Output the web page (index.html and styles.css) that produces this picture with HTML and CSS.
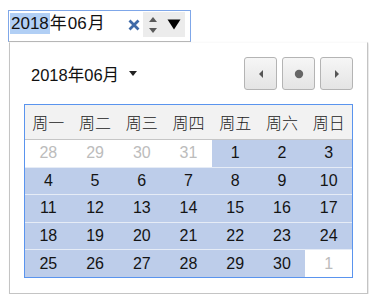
FILE: index.html
```html
<!DOCTYPE html>
<html lang="zh">
<head>
<meta charset="utf-8">
<link rel="stylesheet" href="styles.css">
</head>
<body>
<div class="field">
  <div class="value"><span class="seg sel">2018</span><span class="lit">年</span><span class="seg">06</span><span class="lit">月</span></div>
  <svg class="clear" width="12" height="12" viewBox="0 0 12 12"><path d="M1.5 1.5L10.5 10.5M10.5 1.5L1.5 10.5" stroke="#3f6aa8" stroke-width="2.8" stroke-linecap="butt"/></svg>
  <div class="spin">
    <svg width="10" height="22" viewBox="0 0 10 22"><path d="M1 8L5 3L9 8Z" fill="#5a5a5a"/><path d="M1 14L5 19L9 14Z" fill="#5a5a5a"/></svg>
  </div>
  <div class="drop">
    <svg width="14" height="11" viewBox="0 0 14 11"><path d="M0.5 0.5H13.5L7 10.5Z" fill="#000"/></svg>
  </div>
</div>
<div class="popup">
  <div class="head">
    <div class="title">2018年06月<span class="caret"></span></div>
    <div class="navs">
      <div class="btn"><svg width="8" height="10" viewBox="0 0 8 10"><path d="M6 1L2 5L6 9Z" fill="#555"/></svg></div>
      <div class="btn"><svg width="10" height="10" viewBox="0 0 10 10"><circle cx="5" cy="5" r="4.2" fill="#666"/></svg></div>
      <div class="btn"><svg width="8" height="10" viewBox="0 0 8 10"><path d="M2 1L6 5L2 9Z" fill="#555"/></svg></div>
    </div>
  </div>
  <div class="cal">
    <div class="wk"><span>周一</span><span>周二</span><span>周三</span><span>周四</span><span>周五</span><span>周六</span><span>周日</span></div>
    <div class="days">
      <div class="row"><span class="out">28</span><span class="out">29</span><span class="out">30</span><span class="out">31</span><span>1</span><span>2</span><span>3</span></div>
      <div class="row"><span>4</span><span>5</span><span>6</span><span>7</span><span>8</span><span>9</span><span>10</span></div>
      <div class="row"><span>11</span><span>12</span><span>13</span><span>14</span><span>15</span><span>16</span><span>17</span></div>
      <div class="row"><span>18</span><span>19</span><span>20</span><span>21</span><span>22</span><span>23</span><span>24</span></div>
      <div class="row"><span>25</span><span>26</span><span>27</span><span>28</span><span>29</span><span>30</span><span class="out">1</span></div>
    </div>
  </div>
</div>
</body>
</html>
```
FILE: styles.css
```css
html, body {
  margin: 0;
  padding: 0;
  background: #fff;
  font-family: "Liberation Sans", "Noto Sans CJK SC", sans-serif;
  color: #111;
}

.field {
  box-sizing: border-box;
  margin: 10px 0 0 8px;
  width: 183px;
  height: 32px;
  border: 1px solid #7fa7e9;
  border-bottom-color: #b8b8b8;
  display: flex;
  align-items: flex-start;
}

.value {
  flex: 1;
  margin-top: 2px;
  padding-left: 1px;
  font-size: 17px;
  line-height: 21px;
  display: flex;
  white-space: nowrap;
}

.seg {
  padding: 0 1px;
}

.sel {
  background: #b1cff5;
}

.clear {
  margin-top: 8px;
  margin-right: 3px;
}

.spin {
  width: 20px;
  height: 25px;
  margin-top: 1px;
  background: #ececec;
  display: flex;
  align-items: center;
  justify-content: center;
}

.drop {
  width: 22px;
  height: 25px;
  margin-top: 1px;
  margin-right: 5px;
  background: #ececec;
  display: flex;
  align-items: center;
  justify-content: center;
}

.popup {
  box-sizing: border-box;
  margin-left: 9px;
  width: 359px;
  height: 252px;
  border: 1px solid #c4c4c4;
  border-top-color: #fafafa;
  box-shadow: 1px 1px 2px rgba(0, 0, 0, 0.12);
  padding: 14px 14px 0 14px;
}

.head {
  height: 33px;
  display: flex;
  align-items: center;
  justify-content: space-between;
}

.title {
  padding-left: 7px;
  font-size: 16.5px;
  display: flex;
  align-items: center;
  color: #111;
}

.caret {
  margin-left: 10px;
  width: 0;
  height: 0;
  border-left: 4.5px solid transparent;
  border-right: 4.5px solid transparent;
  border-top: 5px solid #222;
}

.navs {
  display: flex;
  gap: 5px;
}

.btn {
  box-sizing: border-box;
  width: 33px;
  height: 33px;
  border: 1px solid #b4b4b4;
  border-radius: 3px;
  background: linear-gradient(#f6f6f6, #e4e4e4);
  display: flex;
  align-items: center;
  justify-content: center;
}

.cal {
  box-sizing: border-box;
  margin-top: 14px;
  width: 329px;
  height: 174px;
  border: 1px solid #5a94ee;
  display: flex;
  flex-direction: column;
}

.wk {
  height: 34px;
  background: #f2f2f2;
  border-bottom: 1px solid #c6c6c6;
  display: grid;
  grid-template-columns: repeat(7, 1fr);
  align-items: center;
  font-family: "Noto Sans CJK SC", sans-serif;
  font-weight: 300;
  font-size: 16px;
  color: #1a1a1a;
}

.wk span {
  text-align: center;
}

.days {
  flex: 1;
  display: grid;
  grid-template-rows: repeat(5, 1fr);
  row-gap: 1px;
  background: #e6ecf6;
}

.row {
  display: grid;
  grid-template-columns: repeat(7, 1fr);
}

.row span {
  display: flex;
  align-items: center;
  justify-content: center;
  background: #bdcdea;
  font-size: 16px;
  color: #141414;
}

.row span.out {
  background: #fff;
  color: #bcbcbc;
}
```
